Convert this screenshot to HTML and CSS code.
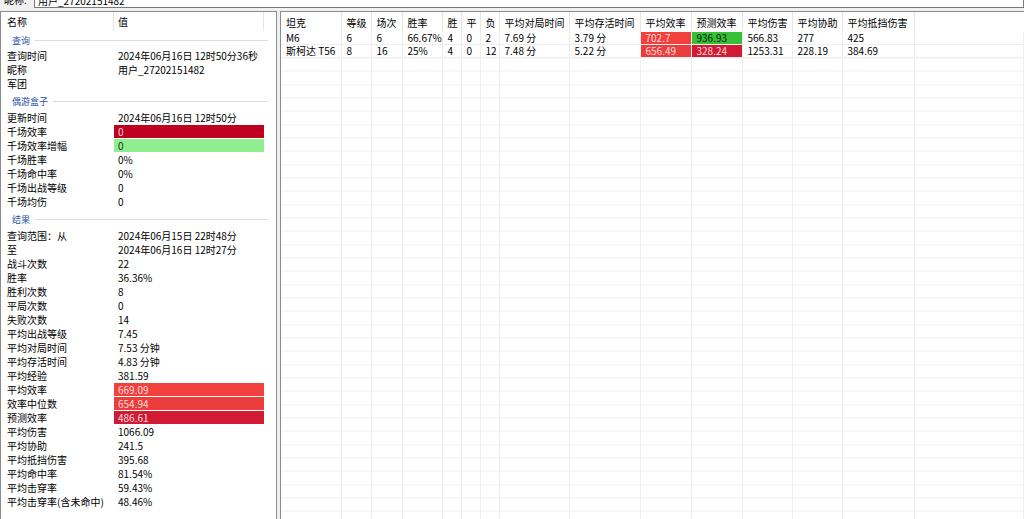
FILE: index.html
```html
<!DOCTYPE html>
<html lang="zh-CN">
<head>
    <meta charset="UTF-8">
    <title>战绩查询</title>
    <link rel="stylesheet" href="styles.css">
</head>
<body>
    <div class="topbar">
        <span class="label">昵称:</span>
        <div class="input">用户_27202151482</div>
    </div>

    <div class="main">
        <div class="props">
            <div class="props-head">
                <span>名称</span>
                <span>值</span>
            </div>

            <div class="group first">查询</div>
            <div class="row"><span>查询时间</span><span>2024年06月16日 12时50分36秒</span></div>
            <div class="row"><span>昵称</span><span>用户_27202151482</span></div>
            <div class="row"><span>军团</span><span></span></div>

            <div class="group">偶游盒子</div>
            <div class="row"><span>更新时间</span><span>2024年06月16日 12时50分</span></div>
            <div class="row"><span>千场效率</span><span class="c-dark">0</span></div>
            <div class="row"><span>千场效率增幅</span><span class="c-light">0</span></div>
            <div class="row"><span>千场胜率</span><span>0%</span></div>
            <div class="row"><span>千场命中率</span><span>0%</span></div>
            <div class="row"><span>千场出战等级</span><span>0</span></div>
            <div class="row"><span>千场均伤</span><span>0</span></div>

            <div class="group">结果</div>
            <div class="row"><span>查询范围：从</span><span>2024年06月15日 22时48分</span></div>
            <div class="row"><span>至</span><span>2024年06月16日 12时27分</span></div>
            <div class="row"><span>战斗次数</span><span>22</span></div>
            <div class="row"><span>胜率</span><span>36.36%</span></div>
            <div class="row"><span>胜利次数</span><span>8</span></div>
            <div class="row"><span>平局次数</span><span>0</span></div>
            <div class="row"><span>失败次数</span><span>14</span></div>
            <div class="row"><span>平均出战等级</span><span>7.45</span></div>
            <div class="row"><span>平均对局时间</span><span>7.53 分钟</span></div>
            <div class="row"><span>平均存活时间</span><span>4.83 分钟</span></div>
            <div class="row"><span>平均经验</span><span>381.59</span></div>
            <div class="row"><span>平均效率</span><span class="c-red">669.09</span></div>
            <div class="row"><span>效率中位数</span><span class="c-red2">654.94</span></div>
            <div class="row"><span>预测效率</span><span class="c-crimson">486.61</span></div>
            <div class="row"><span>平均伤害</span><span>1066.09</span></div>
            <div class="row"><span>平均协助</span><span>241.5</span></div>
            <div class="row"><span>平均抵挡伤害</span><span>395.68</span></div>
            <div class="row"><span>平均命中率</span><span>81.54%</span></div>
            <div class="row"><span>平均击穿率</span><span>59.43%</span></div>
            <div class="row"><span>平均击穿率(含未命中)</span><span>48.46%</span></div>
        </div>

        <div class="grid-panel">
            <table class="grid">
                <colgroup>
                    <col style="width:60px">
                    <col style="width:30px">
                    <col style="width:31px">
                    <col style="width:40px">
                    <col style="width:19px">
                    <col style="width:19px">
                    <col style="width:19px">
                    <col style="width:70px">
                    <col style="width:71px">
                    <col style="width:51px">
                    <col style="width:51px">
                    <col style="width:50px">
                    <col style="width:50px">
                    <col style="width:72px">
                    <col>
                </colgroup>
                <thead>
                    <tr>
                        <th>坦克</th>
                        <th>等级</th>
                        <th>场次</th>
                        <th>胜率</th>
                        <th>胜</th>
                        <th>平</th>
                        <th>负</th>
                        <th>平均对局时间</th>
                        <th>平均存活时间</th>
                        <th>平均效率</th>
                        <th>预测效率</th>
                        <th>平均伤害</th>
                        <th>平均协助</th>
                        <th>平均抵挡伤害</th>
                        <th class="rest"></th>
                    </tr>
                </thead>
                <tbody>
                    <tr class="data">
                        <td>M6</td>
                        <td>6</td>
                        <td>6</td>
                        <td>66.67%</td>
                        <td>4</td>
                        <td>0</td>
                        <td>2</td>
                        <td>7.69 分</td>
                        <td>3.79 分</td>
                        <td class="c-red">702.7</td>
                        <td class="c-green">936.93</td>
                        <td>566.83</td>
                        <td>277</td>
                        <td>425</td>
                        <td></td>
                    </tr>
                    <tr class="data">
                        <td>斯柯达 T56</td>
                        <td>8</td>
                        <td>16</td>
                        <td>25%</td>
                        <td>4</td>
                        <td>0</td>
                        <td>12</td>
                        <td>7.48 分</td>
                        <td>5.22 分</td>
                        <td class="c-red2">656.49</td>
                        <td class="c-crimson">328.24</td>
                        <td>1253.31</td>
                        <td>228.19</td>
                        <td>384.69</td>
                        <td></td>
                    </tr>
                    <tr class="filler">
                        <td></td><td></td><td></td><td></td><td></td>
                        <td></td><td></td><td></td><td></td><td></td>
                        <td></td><td></td><td></td><td></td><td></td>
                    </tr>
                </tbody>
            </table>
        </div>
    </div>
</body>
</html>
```

FILE: styles.css
```css
body {
    margin: 0;
    height: 519px;
    overflow: hidden;
    background-color: #f0f0f0;
    font-family: "Noto Sans CJK SC", "Noto Sans", sans-serif;
    font-size: 10px;
    color: #000;
}

/* nickname input, mostly scrolled out of view */
.topbar {
    height: 8px;
    overflow: hidden;
    display: flex;
    align-items: flex-end;
}
.topbar .label {
    width: 30px;
    padding-left: 4px;
    line-height: 14px;
    flex-shrink: 0;
    margin-bottom: 1px;
}
.topbar .input {
    flex: 1;
    box-sizing: border-box;
    height: 20px;
    line-height: 14px;
    padding: 5px 0 0 3px;
    background-color: #fff;
    border: 1px solid #7a7a7a;
}

.main {
    display: flex;
    gap: 3px;
    margin-top: 3px;
    height: 512px;
}

/* left: property list */
.props {
    width: 275px;
    flex-shrink: 0;
    background-color: #fff;
    border: 1px solid #8c8c8c;
    border-bottom: none;
}
.props-head {
    display: grid;
    grid-template-columns: 113px 150px;
    height: 19px;
    line-height: 19px;
}
.props-head span {
    border-right: 1px solid #e5e5e5;
    padding-left: 6px;
}
.props-head span + span {
    padding-left: 4px;
}
.group {
    height: 20px;
    display: flex;
    align-items: center;
    padding-left: 11px;
    margin-right: 8px;
    font-size: 9px;
    color: #2b55a8;
}
.group.first {
    height: 18px;
}
.group::after {
    content: "";
    flex: 1;
    height: 1px;
    margin-left: 5px;
    background-color: #d3dde9;
}
.row {
    display: grid;
    grid-template-columns: 113px 150px;
    height: 14px;
    line-height: 13px;
    white-space: nowrap;
}
.row span:first-child {
    padding-left: 6px;
}
.row span + span {
    height: 13px;
    padding-left: 4px;
}

/* value colours */
.c-dark {
    background-color: #bf0021;
    color: #ffd9dc;
}
.c-light {
    background-color: #90ee90;
    color: #0b3a0b;
}
.c-red {
    background-color: #f2403f;
    color: #ffdede;
}
.c-red2 {
    background-color: #ec3d3d;
    color: #ffdede;
}
.c-crimson {
    background-color: #d11a33;
    color: #ffdede;
}
.c-green {
    background-color: #35c035;
    color: #062006;
}

/* right: tank grid */
.grid-panel {
    flex: 1;
    background-color: #fff;
    border: 1px solid #8c8c8c;
    border-right: none;
    border-bottom: none;
    overflow: hidden;
}
.grid {
    width: 100%;
    table-layout: fixed;
    border-collapse: collapse;
}
.grid th {
    height: 20px;
    padding: 0 0 0 5px;
    text-align: left;
    font-weight: normal;
    white-space: nowrap;
    overflow: hidden;
    border-right: 1px solid #e5e5e5;
}
.grid th.rest {
    border-right: none;
}
.grid td {
    padding: 0 0 0 5px;
    white-space: nowrap;
    overflow: hidden;
    border-right: 1px solid #eeeeee;
    border-bottom: 1px solid #eeeeee;
}
.grid tr.data td {
    height: 12px;
    line-height: 12px;
}
.grid tr.filler td {
    height: 480px;
    border-bottom: none;
    background-image: repeating-linear-gradient(to bottom, transparent 0, transparent 12.333px, #eeeeee 12.333px, #eeeeee 13.333px);
}
```
